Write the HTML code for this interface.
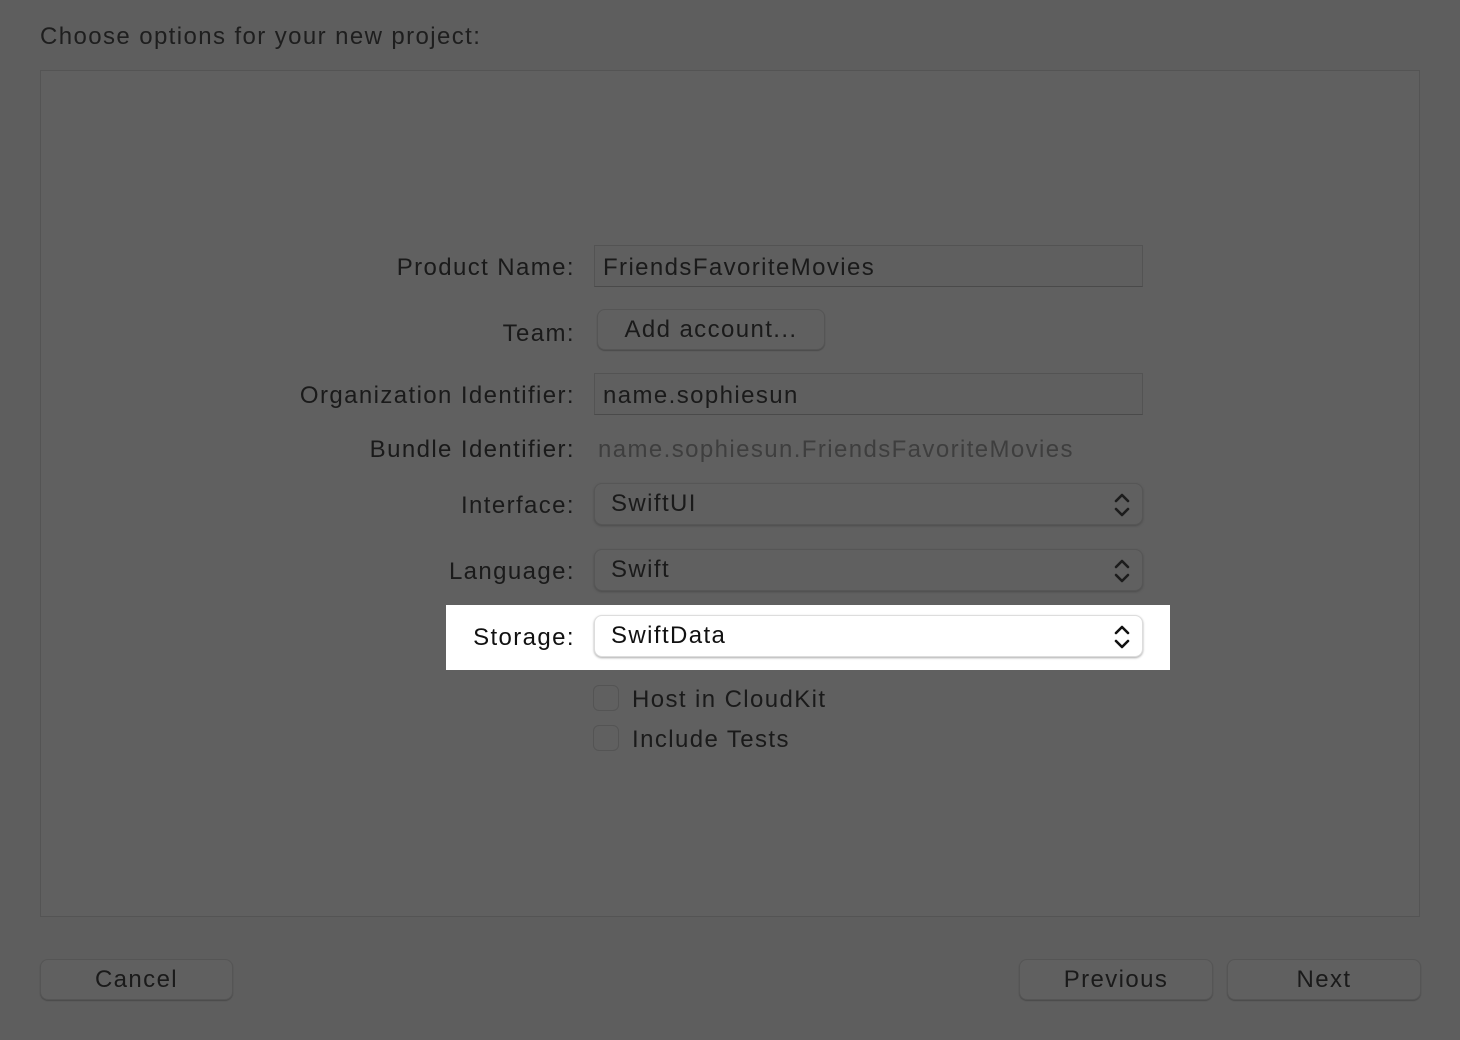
<!DOCTYPE html>
<html><head><style>
body{margin:0;width:1460px;height:1040px;background:#5e5e5e;font-family:"Liberation Sans",sans-serif;color:#1a1a1a;position:relative;overflow:hidden;letter-spacing:1.4px}
.a{position:absolute}
.title{left:40px;top:23px;font-size:24px;color:#1e1e1e}
.panel{left:40px;top:70px;width:1380px;height:847px;border:1px solid #545454;background:#606060;box-sizing:border-box}
.lbl{font-size:24px;text-align:right;right:885px;color:#1a1a1a;letter-spacing:1.4px}
.field{left:594px;width:549px;height:42px;box-sizing:border-box;border:1px solid #535353;border-bottom-color:#4a4a4a;background:#5f5f5f;font-size:24px;padding:8px 0 0 8px}
.btn{box-sizing:border-box;border:1px solid #555;border-radius:8px;background:#606060;box-shadow:0 1px 1px #4a4a4a;font-size:24px;text-align:center;padding-top:6px;height:41px}
.pop{left:594px;width:549px;height:42px;box-sizing:border-box;border:1px solid #565656;border-radius:8px;background:#606060;box-shadow:0 1px 2px #4c4c4c;font-size:24px;padding:6px 0 0 16px}
.chev{position:absolute;right:12px;top:8px}
.cb{left:593px;width:26px;height:26px;box-sizing:border-box;border:1px solid #545454;border-radius:6px;background:#606060}
</style></head><body>
<div class="a title">Choose options for your new project:</div>
<div class="a panel"></div>

<div class="a lbl" style="top:254px">Product Name:</div>
<div class="a field" style="top:245px">FriendsFavoriteMovies</div>

<div class="a lbl" style="top:320px">Team:</div>
<div class="a btn" style="left:597px;top:309px;width:228px">Add account...</div>

<div class="a lbl" style="top:382px">Organization Identifier:</div>
<div class="a field" style="top:373px">name.sophiesun</div>

<div class="a lbl" style="top:436px">Bundle Identifier:</div>
<div class="a" style="left:598px;top:436px;font-size:24px;color:#3e3e3e">name.sophiesun.FriendsFavoriteMovies</div>

<div class="a lbl" style="top:492px">Interface:</div>
<div class="a pop" style="top:483px">SwiftUI<svg class="chev" width="16" height="26" viewBox="0 0 16 26"><path d="M2 9 L8 3 L14 9 M2 17 L8 23 L14 17" fill="none" stroke="#1c1c1c" stroke-width="2.6" stroke-linecap="round" stroke-linejoin="round"/></svg></div>

<div class="a lbl" style="top:558px">Language:</div>
<div class="a pop" style="top:549px">Swift<svg class="chev" width="16" height="26" viewBox="0 0 16 26"><path d="M2 9 L8 3 L14 9 M2 17 L8 23 L14 17" fill="none" stroke="#1c1c1c" stroke-width="2.6" stroke-linecap="round" stroke-linejoin="round"/></svg></div>

<div class="a" style="left:446px;top:605px;width:724px;height:65px;background:#fff"></div>
<div class="a lbl" style="top:624px;color:#111">Storage:</div>
<div class="a pop" style="top:615px;background:#fff;border-color:#ddd;box-shadow:0 1px 2px #aaa;color:#111">SwiftData<svg class="chev" width="16" height="26" viewBox="0 0 16 26"><path d="M2 9 L8 3 L14 9 M2 17 L8 23 L14 17" fill="none" stroke="#111" stroke-width="2.6" stroke-linecap="round" stroke-linejoin="round"/></svg></div>

<div class="a cb" style="top:685px"></div>
<div class="a" style="left:632px;top:686px;font-size:24px">Host in CloudKit</div>
<div class="a cb" style="top:725px"></div>
<div class="a" style="left:632px;top:726px;font-size:24px">Include Tests</div>

<div class="a btn" style="left:40px;top:959px;width:193px">Cancel</div>
<div class="a btn" style="left:1019px;top:959px;width:194px">Previous</div>
<div class="a btn" style="left:1227px;top:959px;width:194px">Next</div>
</body></html>
